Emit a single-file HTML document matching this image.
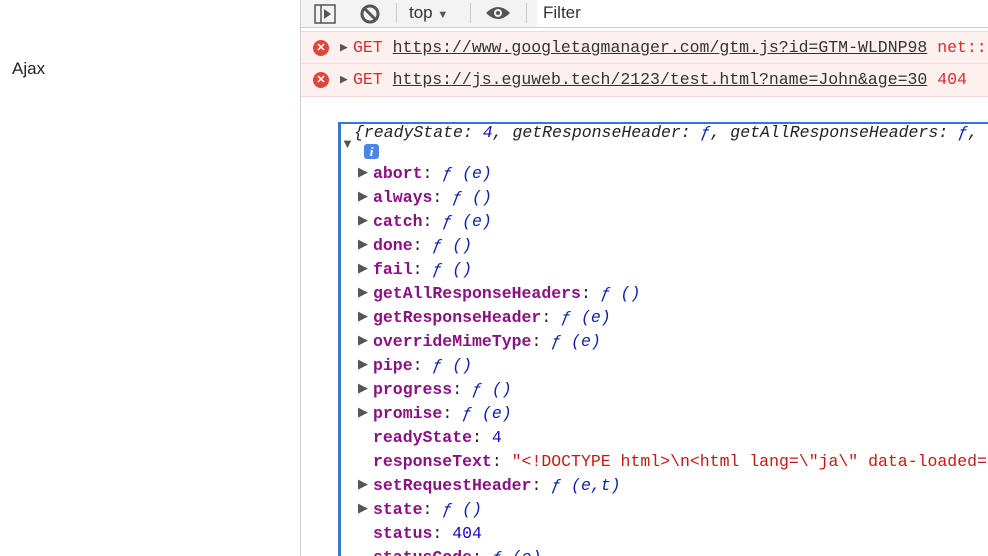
<!DOCTYPE html>
<html><head><meta charset="utf-8"><style>
*{margin:0;padding:0;box-sizing:border-box}
html,body{width:988px;height:556px;overflow:hidden}
body{background:#fff;font-family:"Liberation Sans",sans-serif;position:relative}
.ajax{position:absolute;left:12px;top:59px;font-size:17px;color:#222}
.panel{position:absolute;left:300px;top:0;width:688px;height:556px;border-left:1px solid #d0d0d0;background:#fff;overflow:hidden}
.tb{position:absolute;left:0;top:0;width:688px;height:28px;background:#f3f3f3;border-bottom:1px solid #cfcfcf}
.sep{position:absolute;top:3px;width:1px;height:20px;background:#ccc}
.filter{position:absolute;left:236px;top:0;width:452px;height:27px;background:#fff;font-size:17px;color:#333;padding:3px 0 0 6px}
.err{position:absolute;left:0;width:688px;height:33px;background:#fff0f0;border-bottom:1px solid #fbd6d6;font-family:"Liberation Mono",monospace;font-size:16.5px;color:#d32f2f;white-space:nowrap}
.err span.x{position:absolute;left:12px;top:8px;width:16px;height:16px;border-radius:50%;background:#e0453c;color:#fff;font:bold 11px/16px "Liberation Sans",sans-serif;text-align:center}
.err .t{position:absolute;left:39px;top:8px;font-size:13px;color:#555}
.err .g{position:absolute;left:52px;top:6px}
.u{color:#333;text-decoration:underline}
.box{position:absolute;left:37px;top:122px;width:660px;height:450px;border:2px solid #3a74d8;border-left-width:3px}
.l{position:absolute;font-family:"Liberation Mono",monospace;font-size:16.5px;white-space:nowrap;color:#222;line-height:24px}
.k{color:#881280;font-weight:bold}
.f{color:#0d22aa;font-style:italic}
.n{color:#1c00cf}
.s{color:#c41a16}
.a{position:absolute;font-size:13px;color:#555}
</style></head><body>
<div class="ajax">Ajax</div>
<div class="panel">
 <div class="tb">
  <svg style="position:absolute;left:13px;top:4px" width="22" height="20"><rect x="1" y="1" width="20" height="18" fill="none" stroke="#555" stroke-width="1.5"/><line x1="7" y1="1" x2="7" y2="19" stroke="#555" stroke-width="1.5"/><path d="M10 5 L17 10 L10 15Z" fill="#555"/></svg>
  <svg style="position:absolute;left:58px;top:3px" width="22" height="22"><circle cx="11" cy="11" r="8" fill="none" stroke="#555" stroke-width="3"/><line x1="5.5" y1="5.5" x2="16.5" y2="16.5" stroke="#555" stroke-width="3"/></svg>
  <div class="sep" style="left:95px"></div>
  <div style="position:absolute;left:108px;top:3px;font-size:17px;color:#333">top <span style="font-size:11px;color:#555">▼</span></div>
  <div class="sep" style="left:169px"></div>
  <svg style="position:absolute;left:184px;top:5px" width="26" height="16"><path d="M1 8 Q13 -4 25 8 Q13 20 1 8Z" fill="#555"/><circle cx="13" cy="8" r="4" fill="#f3f3f3"/><circle cx="13" cy="8" r="2" fill="#555"/></svg>
  <div class="sep" style="left:225px"></div>
  <div class="filter">Filter</div>
 </div>
 <div class="err" style="top:31px;border-top:1px solid #fbd6d6"><span class="x">✕</span><span class="t">▶</span><span class="g">GET <span class="u">https://www.googletagmanager.com/gtm.js?id=GTM-WLDNP98</span> net::ERR</span></div>
 <div class="err" style="top:64px"><span class="x">✕</span><span class="t">▶</span><span class="g">GET <span class="u">https://js.eguweb.tech/2123/test.html?name=John&amp;age=30</span> 404</span></div>
 <div class="box"></div>
 <div class="a" style="left:40px;top:136px">▼</div>
 <div class="l" style="left:53px;top:121px;font-style:italic">{readyState: <span class="n">4</span>, getResponseHeader: <span class="f">ƒ</span>, getAllResponseHeaders: <span class="f">ƒ</span>,</div>
 <div style="position:absolute;left:63px;top:144px;width:15px;height:15px;background:#4a86e8;border-radius:3px;color:#fff;font:italic bold 13px/15px 'Liberation Serif',serif;text-align:center">i</div>
 <div class="a" style="left:57px;top:166px;line-height:12px">▶<br><br>▶<br><br>▶<br><br>▶<br><br>▶<br><br>▶<br><br>▶<br><br>▶<br><br>▶<br><br>▶<br><br>▶</div>
 <div class="a" style="left:57px;top:478px;line-height:12px">▶<br><br>▶</div>
 <div class="l" style="left:72px;top:162px">
<span class="k">abort</span>: <span class="f">ƒ (e)</span><br>
<span class="k">always</span>: <span class="f">ƒ ()</span><br>
<span class="k">catch</span>: <span class="f">ƒ (e)</span><br>
<span class="k">done</span>: <span class="f">ƒ ()</span><br>
<span class="k">fail</span>: <span class="f">ƒ ()</span><br>
<span class="k">getAllResponseHeaders</span>: <span class="f">ƒ ()</span><br>
<span class="k">getResponseHeader</span>: <span class="f">ƒ (e)</span><br>
<span class="k">overrideMimeType</span>: <span class="f">ƒ (e)</span><br>
<span class="k">pipe</span>: <span class="f">ƒ ()</span><br>
<span class="k">progress</span>: <span class="f">ƒ ()</span><br>
<span class="k">promise</span>: <span class="f">ƒ (e)</span><br>
<span class="k">readyState</span>: <span class="n">4</span><br>
<span class="k">responseText</span>: <span class="s">"&lt;!DOCTYPE html&gt;\n&lt;html lang=\"ja\" data-loaded=</span><br>
<span class="k">setRequestHeader</span>: <span class="f">ƒ (e,t)</span><br>
<span class="k">state</span>: <span class="f">ƒ ()</span><br>
<span class="k">status</span>: <span class="n">404</span><br>
<span class="k">statusCode</span>: <span class="f">ƒ (e)</span>
 </div>
</div>
</body></html>
